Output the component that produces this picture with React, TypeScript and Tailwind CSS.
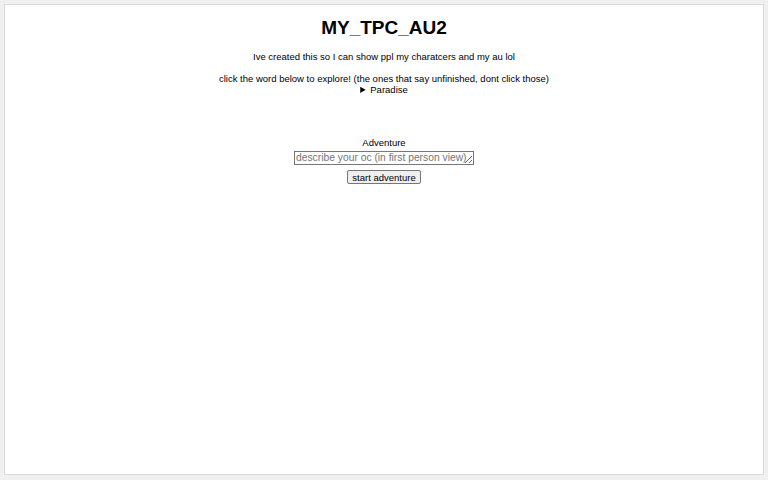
import React from 'react';

export default function App() {
  return (
    <div className="h-[480px] w-[768px] bg-[#f0f0f0] pt-[4px] pb-[5px] px-[4px] font-['Liberation_Sans',Arial,sans-serif] text-black">
      <div className="h-full w-full bg-white border border-[#dadada] flex flex-col items-center">
        <h1 className="mt-[11px] text-[19px] leading-[24px] font-bold">MY_TPC_AU2</h1>
        <p className="mt-[11px] text-[9.5px] leading-[11px]">Ive created this so I can show ppl my charatcers and my au lol</p>
        <p className="mt-[11px] text-[9.5px] leading-[11px]">click the word below to explore! (the ones that say unfinished, dont click those)</p>
        <details className="text-[9.5px] leading-[11px]">
          <summary className="cursor-pointer">Paradise</summary>
        </details>

        <div className="mt-[42px] flex flex-col items-center">
          <label className="text-[9.5px] leading-[11px]">Adventure</label>
          <textarea
            rows={1}
            placeholder="describe your oc (in first person view)"
            className="mt-[3px] h-[14px] w-[180px] border border-[#767676] px-[1px] text-[10.3px] leading-[12px] placeholder:text-[#757575] resize-y overflow-hidden"
          />
          <button className="mt-[5px] h-[14px] px-[4px] text-[9.5px] leading-[11px] bg-[#efefef] border border-[#767676] rounded-[2px]">
            start adventure
          </button>
        </div>
      </div>
    </div>
  );
}
